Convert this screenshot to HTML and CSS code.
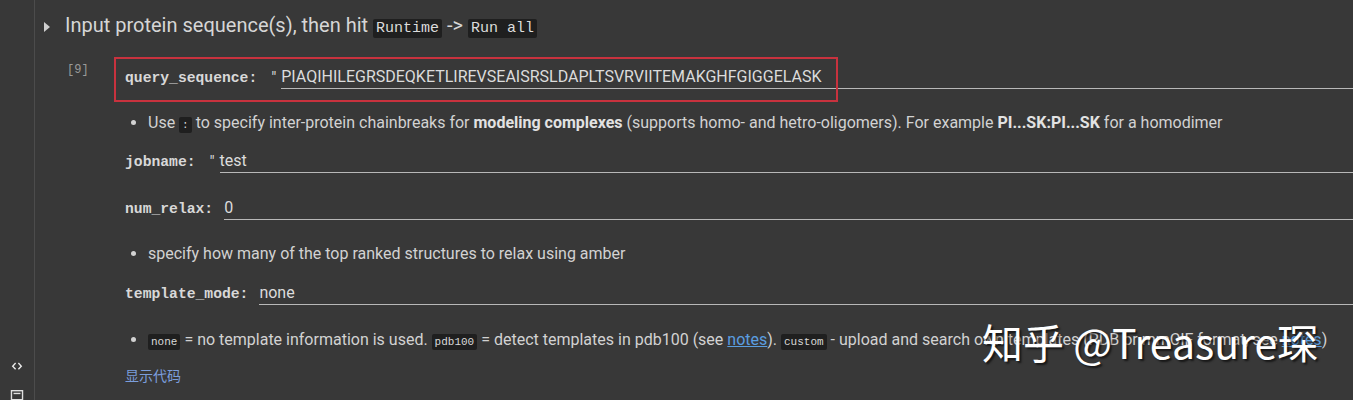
FILE: index.html
```html
<!DOCTYPE html>
<html lang="en">
<head>
<meta charset="utf-8">
<title>ColabFold</title>
<link rel="stylesheet" href="styles.css">
</head>
<body>
<div class="app">
  <aside class="gutter">
    <svg class="gicon" width="16" height="12" viewBox="0 0 16 12"><path d="M6 1.5 L1.8 6 L6 10.5 M10 1.5 L14.2 6 L10 10.5" fill="none" stroke="#e8e8e8" stroke-width="2"/></svg>
    <svg class="gicon gicon-term" width="18" height="14" viewBox="0 0 18 14"><rect x="1" y="1" width="16" height="13" fill="none" stroke="#e0e0e0" stroke-width="2"/><path d="M4 5 H14" stroke="#e0e0e0" stroke-width="2"/></svg>
  </aside>
  <main class="main">
    <div class="heading">
      <span class="caret"></span>
      <h2 class="title">Input protein sequence(s), then hit <code class="kbd">Runtime</code> -&gt; <code class="kbd">Run all</code></h2>
    </div>
    <div class="cell">
      <div class="exec">[9]</div>
      <div class="form">
        <div class="field field-query">
          <span class="label">query_sequence:</span><span class="quote">"</span><span class="input">PIAQIHILEGRSDEQKETLIREVSEAISRSLDAPLTSVRVIITEMAKGHFGIGGELASK</span>
          <div class="highlight"></div>
        </div>
        <ul class="note note-first">
          <li>Use <code class="ic">:</code> to specify inter-protein chainbreaks for <b>modeling complexes</b> (supports homo- and hetro-oligomers). For example <b>PI...SK:PI...SK</b> for a homodimer</li>
        </ul>
        <div class="field">
          <span class="label">jobname:</span><span class="quote">"</span><span class="input">test</span>
        </div>
        <div class="field field-next">
          <span class="label">num_relax:</span><span class="input">0</span>
        </div>
        <ul class="note">
          <li>specify how many of the top ranked structures to relax using amber</li>
        </ul>
        <div class="field">
          <span class="label">template_mode:</span><span class="input">none</span>
        </div>
        <ul class="note note-last">
          <li><code class="ic">none</code> = no template information is used. <code class="ic">pdb100</code> = detect templates in pdb100 (see <a href="#">notes</a>). <code class="ic">custom</code> - upload and search own templates (PDB or mmCIF format, see <a href="#">notes</a>)</li>
        </ul>
        <a class="show-code" href="#">显示代码</a>
      </div>
    </div>
  </main>
  <div class="watermark">知乎 @Treasure琛</div>
</div>
</body>
</html>
```

FILE: styles.css
```css
html, body {
  margin: 0;
  padding: 0;
  background: #383838;
  height: 400px;
  overflow: hidden;
}
body {
  font-family: Roboto, "Noto Sans", "Noto Sans CJK SC", sans-serif;
  color: #d4d4d4;
}
.app {
  position: relative;
  display: flex;
  width: 1353px;
  height: 400px;
}
.gutter {
  width: 35px;
  flex: none;
  border-right: 1px solid #4c4c4c;
  display: flex;
  flex-direction: column;
  align-items: center;
  padding-top: 362px;
  box-sizing: border-box;
  height: 400px;
}
.gicon { display: block; }
.gicon-term { margin-top: 20px; }
.main {
  flex: 1;
  min-width: 0;
  padding-top: 13px;
}
.heading {
  display: flex;
  align-items: center;
  padding-left: 9px;
  height: 28px;
}
.caret {
  width: 0;
  height: 0;
  border-left: 6px solid #cfcfcf;
  border-top: 5px solid transparent;
  border-bottom: 5px solid transparent;
  margin-right: 15px;
}
.title {
  margin: 0;
  font-weight: 400;
  font-size: 20px;
  line-height: 28px;
  color: #d6d6d6;
  white-space: nowrap;
}
.kbd {
  font-family: "Liberation Mono", monospace;
  font-size: 15px;
  background: #1f1f1f;
  color: #dcdcdc;
  padding: 1px 3px;
  border-radius: 2px;
}
.cell {
  display: flex;
  margin-top: 21px;
}
.exec {
  width: 90px;
  flex: none;
  box-sizing: border-box;
  padding-left: 32px;
  font-family: "Liberation Mono", monospace;
  font-size: 12px;
  line-height: 16px;
  color: #9a9a9a;
}
.form {
  flex: 1;
  min-width: 0;
}
.field {
  position: relative;
  display: flex;
  align-items: flex-end;
  height: 24px;
}
.field-query { margin-top: 3px; }
.field-next { margin-top: 23px; }
.label {
  font-family: "Liberation Mono", monospace;
  font-weight: 700;
  font-size: 14.7px;
  line-height: 22px;
  color: #d8d8d8;
  margin-right: 11px;
  white-space: nowrap;
}
.quote {
  font-size: 16px;
  line-height: 22px;
  color: #d6d6d6;
  width: 10px;
  margin-left: 3px;
  flex: none;
}
.input {
  flex: 1;
  font-size: 16px;
  line-height: 22px;
  color: #dcdcdc;
  border-bottom: 1px solid #b8b8b8;
  white-space: nowrap;
}
.highlight {
  position: absolute;
  left: -11px;
  top: -8px;
  width: 724px;
  height: 45px;
  box-sizing: border-box;
  border: 2px solid #c8323e;
  pointer-events: none;
}
.note {
  margin: 24px 0 17px;
  padding-left: 23px;
  font-size: 16px;
  line-height: 20px;
  color: #d2d2d2;
  white-space: nowrap;
}
.note-first { margin-bottom: 14px; }
.note-last { margin-top: 25px; margin-bottom: 13px; }
.note b { font-weight: 700; color: #e2e2e2; }
.ic {
  font-family: "Liberation Mono", monospace;
  font-size: 11px;
  background: #1f1f1f;
  color: #d8d8d8;
  padding: 2px 3px;
  border-radius: 2px;
}
.note a {
  color: #5b9ee0;
  text-decoration: underline;
}
.show-code {
  display: block;
  font-family: "Noto Sans CJK SC", sans-serif;
  font-size: 14px;
  line-height: 20px;
  color: #7b9edc;
  text-decoration: none;
}
.watermark {
  position: absolute;
  left: 982px;
  top: 314px;
  font-family: "Noto Sans CJK SC", sans-serif;
  font-weight: 400;
  font-size: 41px;
  line-height: 54px;
  color: #ffffff;
  white-space: nowrap;
  text-shadow: 2px 2px 2px rgba(0,0,0,0.6);
  pointer-events: none;
}
```
